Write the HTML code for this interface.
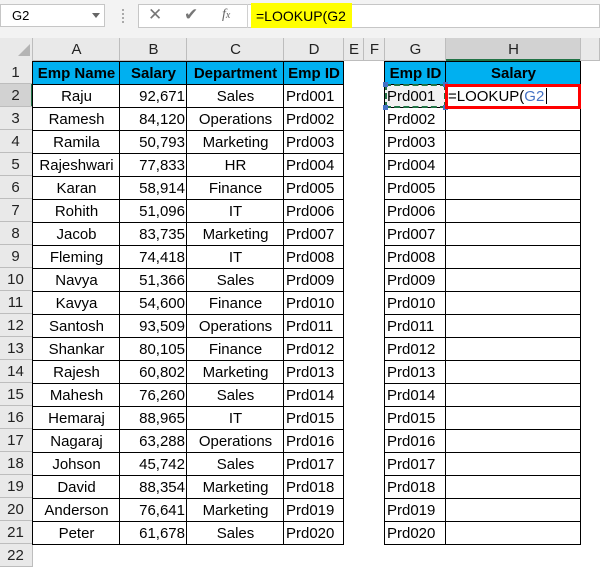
<!DOCTYPE html>
<html><head><style>
*{margin:0;padding:0;box-sizing:border-box}
body{width:600px;height:567px;background:#fff;font-family:"Liberation Sans",sans-serif;position:relative;overflow:hidden}
.a{position:absolute}
.c{position:absolute;font-size:15px;line-height:24px;white-space:nowrap;color:#000}
</style></head><body>
<div class="a" style="left:0;top:0;width:600px;height:38px;background:#f3f3f3"></div>
<div class="a" style="left:0;top:4px;width:105px;height:23px;background:#fff;border:1px solid #c6c6c6"></div>
<div class="c" style="left:12px;top:4px;font-size:13px">G2</div>
<div class="a" style="left:92px;top:13px;border-left:4px solid transparent;border-right:4px solid transparent;border-top:5px solid #666"></div>
<div class="a" style="left:122px;top:9px;width:2px;height:14px;border-left:2px dotted #aaa"></div>
<div class="a" style="left:138px;top:4px;width:462px;height:24px;background:#fff;border:1px solid #c6c6c6"></div>
<div class="c" style="left:148px;top:3px;color:#777;font-size:17px">✕</div>
<div class="c" style="left:184px;top:3px;color:#777;font-size:17px">✔</div>
<div class="c" style="left:222px;top:3px;color:#666;font-size:14px;font-style:italic;font-family:'Liberation Serif',serif">f<span style="font-size:10px">x</span></div>
<div class="a" style="left:247px;top:4px;width:1px;height:24px;background:#d0d0d0"></div>
<div class="a" style="left:251px;top:3px;width:101px;height:25px;background:#ffff00"></div>
<div class="c" style="left:256px;top:4px;font-size:14px">=LOOKUP(G2</div>
<div id="g"></div>
<script>
var X=[0,33,120,187,284,344,364,385,446,581,600],L=["","A","B","C","D","E","F","G","H",""];
var h='';
h+='<div class="a" style="left:0;top:38px;width:600px;height:23px;background:#e9e9e9;border-bottom:1px solid #bdbdbd"></div>';
h+='<div class="a" style="left:0;top:38px;width:33px;height:529px;background:#e9e9e9;border-right:1px solid #bdbdbd"></div>';
h+='<div class="a" style="left:18px;top:44px;border-left:12px solid transparent;border-bottom:12px solid #b4b4b4"></div>';
for(var i=1;i<10;i++){var w=X[i+1]-X[i];
 if(i==8)h+='<div class="a" style="left:'+X[i]+'px;top:38px;width:'+w+'px;height:23px;background:#d2d2d2;border-bottom:2px solid #217346"></div>';
 h+='<div class="a" style="left:'+(X[i+1]-1)+'px;top:38px;width:1px;height:23px;background:#bdbdbd"></div>';
 h+='<div class="c" style="left:'+X[i]+'px;top:38px;width:'+w+'px;text-align:center;font-size:15px;color:#222">'+L[i]+'</div>';}
for(var r=1;r<=22;r++){var y=61+(r-1)*23;
 if(r==2)h+='<div class="a" style="left:0;top:'+y+'px;width:33px;height:23px;background:#d2d2d2;border-right:2px solid #217346"></div>';
 h+='<div class="a" style="left:0;top:'+(y+22)+'px;width:33px;height:1px;background:#bdbdbd"></div>';
 h+='<div class="c" style="left:0;top:'+y+'px;width:31px;text-align:center;color:#222">'+r+'</div>';}
var D=[["Raju","92,671","Sales"],["Ramesh","84,120","Operations"],["Ramila","50,793","Marketing"],["Rajeshwari","77,833","HR"],["Karan","58,914","Finance"],["Rohith","51,096","IT"],["Jacob","83,735","Marketing"],["Fleming","74,418","IT"],["Navya","51,366","Sales"],["Kavya","54,600","Finance"],["Santosh","93,509","Operations"],["Shankar","80,105","Finance"],["Rajesh","60,802","Marketing"],["Mahesh","76,260","Sales"],["Hemaraj","88,965","IT"],["Nagaraj","63,288","Operations"],["Johson","45,742","Sales"],["David","88,354","Marketing"],["Anderson","76,641","Marketing"],["Peter","61,678","Sales"]];
function cell(x1,x2,y,t,bg,al,bold,col){var s='<div class="a" style="left:'+(x1-1)+'px;top:'+(y-1)+'px;width:'+(x2-x1+1)+'px;height:24px;border:1px solid #000;'+(bg?'background:'+bg:'')+'"></div>';
 s+='<div class="c" style="left:'+(x1+2)+'px;top:'+y+'px;width:'+(x2-x1-4)+'px;text-align:'+al+';'+(bold?'font-weight:bold;':'')+(col?'color:'+col:'')+'">'+t+'</div>';return s;}
var hd=["Emp Name","Salary","Department","Emp ID"];
for(var i=0;i<4;i++)h+=cell(X[i+1],X[i+2],62,hd[i],'#00b0f0','center',1);
h+=cell(X[7],X[8],62,'Emp ID','#00b0f0','center',1);
h+=cell(X[8],X[9],62,'Salary','#00b0f0','center',1);
for(var r=0;r<20;r++){var y=85+r*23,id='Prd0'+(r<9?'0':'')+(r+1);
 h+=cell(X[1],X[2],y,D[r][0],'','center');h+=cell(X[2],X[3],y,D[r][1],'','right');
 h+=cell(X[3],X[4],y,D[r][2],'','center');h+=cell(X[4],X[5],y,id,'','left');
 h+=cell(X[7],X[8],y,id,r==0?'#f2f2f2':'','left');h+=cell(X[8],X[9],y,'','','left');}
h+='<div class="a" style="left:385px;top:84px;width:61px;height:24px;border:2px dashed #217346"></div>';
[[383,82],[443,82],[383,105],[443,105]].forEach(function(p){h+='<div class="a" style="left:'+p[0]+'px;top:'+p[1]+'px;width:5px;height:5px;background:#4472c4"></div>';});
h+='<div class="a" style="left:445px;top:84px;width:136px;height:25px;border:3px solid #ff0000;background:#fff"></div>';
h+='<div class="c" style="left:448px;top:85px">=LOOKUP(<span style="color:#4472c4">G2</span><span style="display:inline-block;width:1px;height:16px;background:#000;margin-left:2px;vertical-align:-3px"></span></div>';
document.getElementById('g').innerHTML=h;
</script>
</body></html>
